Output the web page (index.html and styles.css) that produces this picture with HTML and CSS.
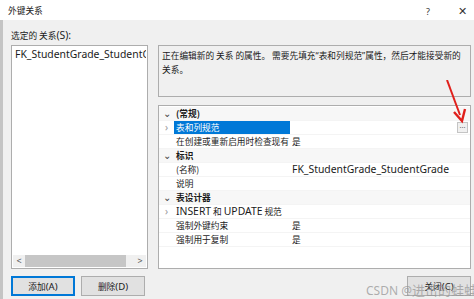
FILE: index.html
```html
<!DOCTYPE html>
<html lang="zh-CN">
<head>
  <meta charset="UTF-8" />
  <title>外键关系</title>
  <link rel="stylesheet" href="styles.css">
</head>
<body>
  <div class="dialog">
    <div class="titlebar">
      <span class="title">外键关系</span>
      <span class="tb-btn help"><span class="en">?</span></span>
      <span class="tb-btn close">✕</span>
    </div>
    <div class="content">
      <div class="label">选定的 关系<span class="en">(S):</span></div>
      <div class="main">
        <div class="list">
          <div class="list-item"><span class="en">FK_StudentGrade_StudentGrade</span></div>
          <div class="hscroll">
            <div class="sb-arrow">&lt;</div>
            <div class="sb-thumb"></div>
            <div class="sb-arrow">&gt;</div>
          </div>
        </div>
        <div class="right">
          <div class="desc">正在编辑新的 关系 的属性。 需要先填充<span class="q">&#8220;</span>表和列规范<span class="q">&#8221;</span>属性，然后才能接受新的关系。</div>
          <div class="grid">
            <div class="row cat"><span class="gut">⌄</span><span class="name">(常规)</span></div>
            <div class="row"><span class="gut light">›</span><span class="name sel">表和列规范</span><span class="val"></span><span class="dots">...</span></div>
            <div class="row"><span class="gut"></span><span class="name">在创建或重新启用时检查现有</span><span class="val">是</span></div>
            <div class="row cat"><span class="gut">⌄</span><span class="name">标识</span></div>
            <div class="row"><span class="gut"></span><span class="name">(名称)</span><span class="val"><span class="en">FK_StudentGrade_StudentGrade</span></span></div>
            <div class="row"><span class="gut"></span><span class="name">说明</span><span class="val"></span></div>
            <div class="row cat"><span class="gut">⌄</span><span class="name">表设计器</span></div>
            <div class="row"><span class="gut light">›</span><span class="name"><span class="en">INSERT</span> 和 <span class="en">UPDATE</span> 规范</span><span class="val"></span></div>
            <div class="row"><span class="gut"></span><span class="name">强制外键约束</span><span class="val">是</span></div>
            <div class="row"><span class="gut"></span><span class="name">强制用于复制</span><span class="val">是</span></div>
          </div>
        </div>
      </div>
      <div class="buttons">
        <div class="btn-group">
          <button class="btn default">添加<span class="en">(A)</span></button>
          <button class="btn">删除<span class="en">(D)</span></button>
        </div>
        <button class="btn">关闭<span class="en">(C)</span></button>
      </div>
    </div>
  </div>

  <svg class="red-arrow" width="30" height="50" viewBox="0 0 30 50">
    <path d="M5 0 L18 35" stroke="#e0201c" stroke-width="2" fill="none"/>
    <path d="M12 32 L20 41 L23 29" stroke="#e0201c" stroke-width="2.4" fill="none"/>
  </svg>
  <div class="watermark"><span class="wm-en">CSDN @</span>进击的蛙蛙</div>
</body>
</html>
```

FILE: styles.css
```css
body { margin: 0; font-family: "Noto Sans CJK SC", "Noto Sans", sans-serif; font-size: 8.7px; color: #1a1a1a; }
.en { font-family: "Noto Sans", sans-serif; font-size: 10.4px; }
.q { font-family: "Noto Sans", sans-serif; }
.dialog { width: 474px; height: 299px; background: #f0f0f0; position: relative; overflow: hidden; }
.titlebar { height: 20px; background: #fff; display: flex; align-items: center; padding-left: 8px; }
.title { flex: 1; }
.tb-btn { text-align: center; color: #333; font-size: 11px; }
.help { width: 44px; }
.close { width: 24px; }
.help .en { font-size: 9px; }
.content { border-left: 3px solid #c4c4c4; height: 279px; box-sizing: border-box; padding: 8px 3px 0 8px; }
.label { height: 17px; line-height: 15px; }
.main { display: flex; gap: 10px; height: 224px; }
.list { width: 137px; flex: none; box-sizing: border-box; background: #fff; border: 1px solid #adadad; display: grid; grid-template-rows: 1fr 12px; padding: 0 1px 1px 1px; }
.list-item { padding: 1px 2px; white-space: nowrap; line-height: 14px; overflow: hidden; min-width: 0; }
.hscroll { display: grid; grid-template-columns: 12px 1fr 12px; align-items: center; background: #f0f0f0; }
.sb-arrow { text-align: center; font-family: "Noto Sans", sans-serif; font-size: 9px; line-height: 12px; color: #555; }
.sb-thumb { height: 12px; background: #c6c6c6; margin-right: 8px; }
.right { flex: 1; display: flex; flex-direction: column; gap: 8px; }
.desc { height: 52px; box-sizing: border-box; border: 1px solid #adadad; background: #f0f0f0; padding: 3px 3px; line-height: 13px; }
.grid { flex: 1; background: #fff; border: 1px solid #adadad; padding-top: 1px; }
.row { height: 13px; display: flex; align-items: center; line-height: 13px; position: relative; border-bottom: 1px solid #f4f4f4; }
.row.cat { background: #f7f7f7; font-weight: bold; }
.gut { width: 15px; text-align: center; color: #444; font-family: "Noto Sans", sans-serif; font-size: 10px; font-weight: normal; }
.gut.light { color: #999; }
.name { width: 114px; padding-left: 2px; white-space: nowrap; overflow: hidden; }
.name.sel { background: #0078d7; color: #fff; }
.val { flex: 1; padding-left: 2px; white-space: nowrap; }
.dots { position: absolute; right: 2px; top: 1px; width: 9px; height: 9px; border: 1px solid #c4c4c4; background: #f0f0f0; font-size: 7px; line-height: 5px; text-align: center; color: #555; }
.buttons { display: flex; justify-content: space-between; padding-top: 7px; }
.btn-group { display: flex; gap: 6px; }
.btn { width: 64px; height: 20px; font-family: inherit; font-size: 8.7px; background: #e1e1e1; border: 1px solid #adadad; color: #1a1a1a; padding: 0; }
.btn .en { font-size: 9.6px; }
.btn.default { border: 2px solid #0078d7; }
.red-arrow { position: absolute; left: 442px; top: 80px; }
.watermark { position: absolute; left: 366px; top: 280px; font-size: 13px; color: rgba(150,150,150,0.75); white-space: nowrap; }
.wm-en { font-family: "Noto Sans", sans-serif; font-size: 12px; }
```
